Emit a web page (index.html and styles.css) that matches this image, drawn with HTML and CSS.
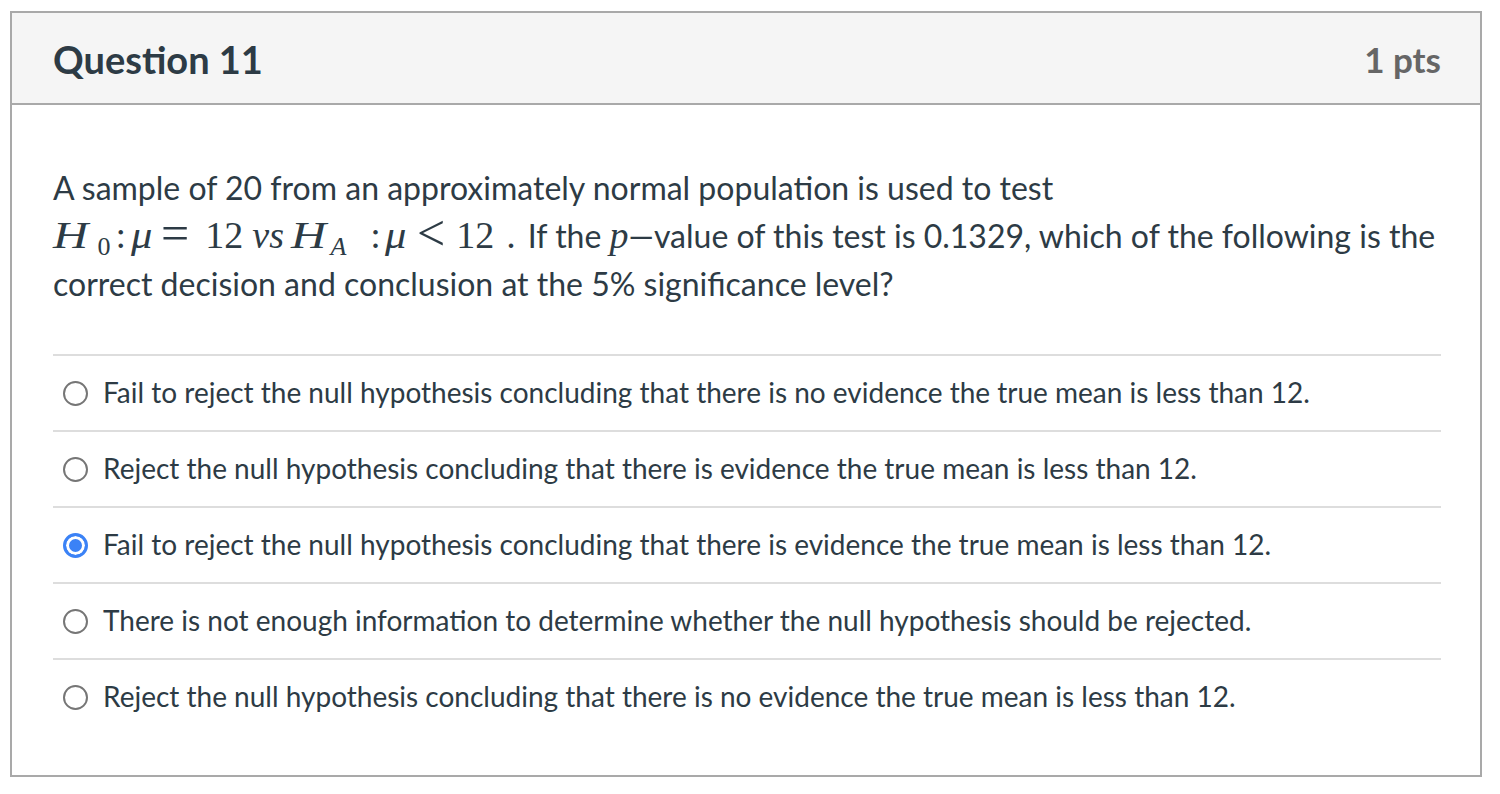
FILE: index.html
```html
<!DOCTYPE html>
<html>
<head>
<meta charset="utf-8">
<link rel="stylesheet" href="styles.css">
</head>
<body>
<div class="card">
  <div class="header">
    <h2 class="title">Question 11</h2>
    <div class="pts">1 pts</div>
  </div>
  <div class="body">
    <p class="question">A sample of 20 from an approximately normal population is used to test<br><span class="math"><i class="wide h0">H</i><sub class="s0">0</sub><span class="op c1">:</span><i class="mu mu1">μ</i><span class="rel eq">=</span><span class="n1">12</span><i class="vs">vs</i><i class="wide ha">H</i><sub class="sa"><i>A</i></sub><span class="op c2">:</span><i class="mu mu2">μ</i><span class="rel lt">&lt;</span><span class="n2">12</span><span class="dot">.</span></span> If the <span class="math"><i>p</i></span>—value of this test is 0.1329, which of the following is the correct decision and conclusion at the 5% significance level?</p>
    <div class="answers">
      <label class="answer"><span class="radio"></span><span class="atext">Fail to reject the null hypothesis concluding that there is no evidence the true mean is less than 12.</span></label>
      <label class="answer"><span class="radio"></span><span class="atext">Reject the null hypothesis concluding that there is evidence the true mean is less than 12.</span></label>
      <label class="answer"><span class="radio checked"></span><span class="atext">Fail to reject the null hypothesis concluding that there is evidence the true mean is less than 12.</span></label>
      <label class="answer"><span class="radio"></span><span class="atext">There is not enough information to determine whether the null hypothesis should be rejected.</span></label>
      <label class="answer"><span class="radio"></span><span class="atext">Reject the null hypothesis concluding that there is no evidence the true mean is less than 12.</span></label>
    </div>
  </div>
</div>
</body>
</html>
```
FILE: styles.css
```css
html, body {
  margin: 0;
  padding: 0;
  background: #ffffff;
}
body {
  padding: 11px 0 0 10px;
  font-family: Lato, "Liberation Sans", sans-serif;
  color: #2d3b45;
}
.card {
  width: 1472px;
  border: 2px solid #a9a9a9;
  height: 766px;
  box-sizing: border-box;
}
.header {
  display: flex;
  justify-content: space-between;
  align-items: center;
  background: #f5f5f5;
  height: 92px;
  border-bottom: 2px solid #a9a9a9;
  box-sizing: border-box;
  padding: 2px 39px 0 41px;
}
.title {
  margin: 0;
  font-size: 38px;
  font-weight: 700;
  color: #2d3b45;
}
.pts {
  font-size: 35px;
  font-weight: 700;
  color: #666666;
}
.body {
  padding: 59px 39px 0 41px;
}
.question {
  margin: 0;
  font-size: 32px;
  line-height: 48px;
}
.math {
  font-family: "Liberation Serif", "DejaVu Serif", serif;
  font-size: 38px;
  line-height: 0;
}
.math i {
  font-style: italic;
}
.math .wide {
  display: inline-block;
  transform: scaleX(1.28);
  transform-origin: left center;
}
.math .mu {
  display: inline-block;
  transform: scaleX(1.12);
  transform-origin: left center;
}
.math sub {
  font-size: 26px;
  vertical-align: -7px;
  line-height: 0;
}
.math .s0 {
  margin-left: 17px;
}
.math .c1 {
  margin-left: 5px;
}
.math .mu1 {
  margin-left: 5px;
}
.math .rel {
  font-size: 50px;
  line-height: 0;
  vertical-align: -2px;
}
.math .eq {
  margin-left: 11px;
}
.math .n1 {
  margin-left: 16px;
}
.math .vs {
  margin-left: 9px;
}
.math .ha {
  margin-left: 7px;
}
.math .sa {
  margin-left: 12px;
}
.math .c2 {
  margin-left: 24px;
}
.math .mu2 {
  margin-left: 4px;
}
.math .lt {
  margin-left: 13px;
}
.math .n2 {
  margin-left: 11px;
}
.math .dot {
  margin-left: 12px;
  margin-right: 4px;
}
.answers {
  margin-top: 46px;
}
.answer {
  display: flex;
  align-items: center;
  height: 76px;
  border-top: 2px solid #dddddd;
  box-sizing: border-box;
  font-size: 28px;
  padding-left: 10px;
}
.radio {
  width: 21px;
  height: 21px;
  border: 2px solid #767676;
  border-radius: 50%;
  margin-right: 15px;
  flex: none;
  box-sizing: content-box;
}
.radio.checked {
  border-color: #3b82f6;
  background: #3b82f6;
  box-shadow: inset 0 0 0 3px #ffffff;
  width: 19px;
  height: 19px;
  border-width: 3px;
}
.atext {
  position: relative;
  top: -1px;
}
```
